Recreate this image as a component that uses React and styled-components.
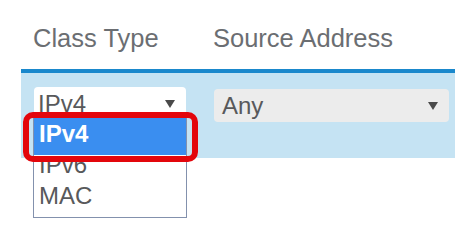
import React from "react";
import styled, { createGlobalStyle } from "styled-components";

const Global = createGlobalStyle`
  html, body { margin: 0; padding: 0; background: #ffffff; }
  body { width: 474px; height: 238px; overflow: hidden; font-family: "Liberation Sans", Arial, sans-serif; }
`;

const Page = styled.div`
  position: relative;
  width: 474px;
  height: 238px;
  padding: 24px 0 0 21px;
  box-sizing: border-box;
`;

const Table = styled.div`
  width: 434px;
`;

const HeaderRow = styled.div`
  display: grid;
  grid-template-columns: 180px 1fr;
  padding: 0 0 0 12px;
  height: 45px;
  border-bottom: 4px solid #1a88cc;
`;

const HeaderCell = styled.div`
  font-size: 25.5px;
  line-height: 28px;
  color: #6b6e72;
`;

const BodyRow = styled.div`
  display: grid;
  grid-template-columns: 180px 235px;
  align-items: start;
  padding: 14px 0 0 13px;
  height: 85px;
  box-sizing: border-box;
  background: #c5e3f3;
`;

const Select = styled.div`
  display: flex;
  align-items: center;
  justify-content: space-between;
  box-sizing: border-box;
  width: ${(p) => p.$w}px;
  height: 33px;
  margin-top: ${(p) => p.$top || 0}px;
  padding: 0 11px 0 ${(p) => p.$pl}px;
  background: ${(p) => p.$bg};
  border-radius: 4px;
  font-size: 24px;
  color: #58595b;
`;

const Arrow = styled.span`
  width: 0;
  height: 0;
  border-left: 5px solid transparent;
  border-right: 5px solid transparent;
  border-top: 8px solid #4a4a4a;
`;

const List = styled.div`
  position: absolute;
  left: 33px;
  top: 118px;
  width: 154px;
  box-sizing: border-box;
  border: 1px solid #8391ad;
  border-top: none;
  background: #ffffff;
  padding-bottom: 6px;
`;

const Option = styled.div`
  height: 31px;
  line-height: 31px;
  padding-left: 5px;
  font-size: 24px;
  font-weight: ${(p) => (p.$active ? 700 : 400)};
  color: ${(p) => (p.$active ? "#ffffff" : "#58595b")};
  background: ${(p) => (p.$active ? "#3a8ef0" : "transparent")};
  box-shadow: ${(p) => (p.$active ? "0 6px 0 #3a8ef0" : "none")};
`;

const Ring = styled.div`
  position: absolute;
  left: 23px;
  top: 112px;
  width: 175px;
  height: 50px;
  box-sizing: border-box;
  border: 6px solid #e3060c;
  border-radius: 10px;
`;

export default function App() {
  return (
    <>
      <Global />
      <Page>
        <Table>
          <HeaderRow>
            <HeaderCell>Class Type</HeaderCell>
            <HeaderCell>Source Address</HeaderCell>
          </HeaderRow>
          <BodyRow>
            <Select $w={152} $pl={4} $bg="#ffffff">
              IPv4
              <Arrow />
            </Select>
            <Select $w={235} $pl={8} $bg="#ececec" $top={2}>
              Any
              <Arrow />
            </Select>
          </BodyRow>
        </Table>
        <List>
          <Option $active>IPv4</Option>
          <Option>IPv6</Option>
          <Option>MAC</Option>
        </List>
        <Ring />
      </Page>
    </>
  );
}
